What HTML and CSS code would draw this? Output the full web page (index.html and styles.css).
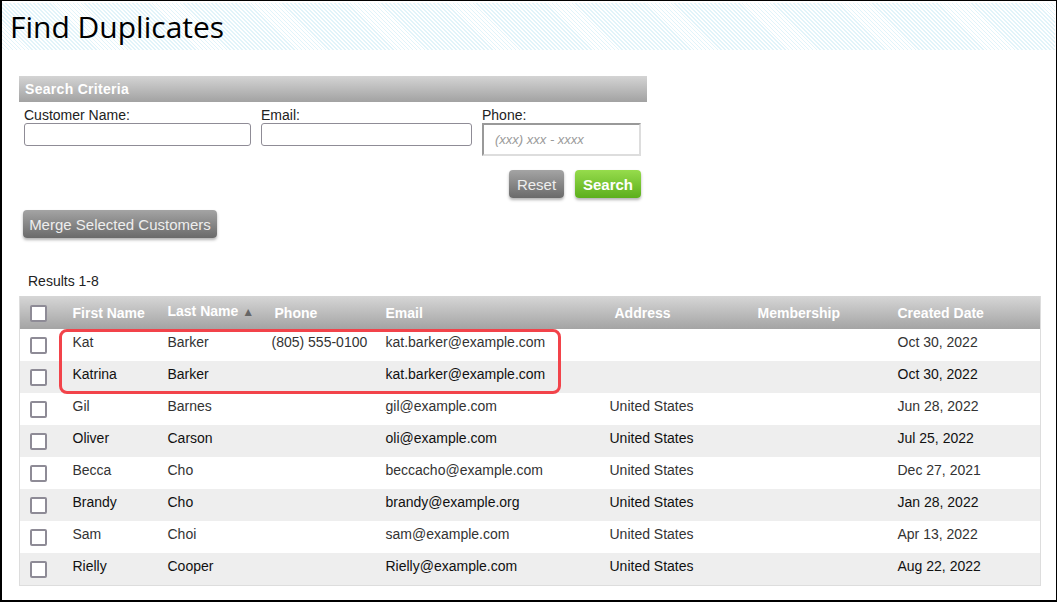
FILE: index.html
```html
<!DOCTYPE html>
<html lang="en">
<head>
    <meta charset="UTF-8">
    <title>Find Duplicates</title>
    <link rel="stylesheet" href="styles.css">
</head>
<body>
    <div class="page">
        <div class="title-bar">
            <h1>Find Duplicates</h1>
        </div>

        <div class="search-panel">
            <div class="panel-head">Search Criteria</div>
            <div class="fields">
                <div class="field name-field">
                    <label for="name">Customer Name:</label>
                    <input type="text" id="name">
                </div>
                <div class="field email-field">
                    <label for="email">Email:</label>
                    <input type="text" id="email">
                </div>
                <div class="field phone-field">
                    <label for="phone">Phone:</label>
                    <input type="text" id="phone" placeholder="(xxx) xxx - xxxx">
                </div>
            </div>
            <div class="actions">
                <button class="btn btn-grey reset-btn">Reset</button>
                <button class="btn btn-green">Search</button>
            </div>
        </div>

        <button class="btn btn-grey merge-btn">Merge Selected Customers</button>

        <div class="results-count">Results 1-8</div>

        <table class="results">
            <thead>
                <tr>
                    <th class="col-check"><span class="box"></span></th>
                    <th class="col-first">First Name</th>
                    <th class="col-last sorted">Last Name <span class="arrow">&#9650;</span></th>
                    <th class="col-phone">Phone</th>
                    <th class="col-email">Email</th>
                    <th class="col-address">Address</th>
                    <th class="col-member">Membership</th>
                    <th class="col-date">Created Date</th>
                </tr>
            </thead>
            <tbody>
                <tr>
                    <td><span class="box"></span></td>
                    <td>Kat</td><td>Barker</td><td class="phone">(805) 555-0100</td>
                    <td>kat.barker@example.com</td><td class="addr"></td><td></td><td>Oct 30, 2022</td>
                </tr>
                <tr>
                    <td><span class="box"></span></td>
                    <td>Katrina</td><td>Barker</td><td class="phone"></td>
                    <td>kat.barker@example.com</td><td class="addr"></td><td></td><td>Oct 30, 2022</td>
                </tr>
                <tr>
                    <td><span class="box"></span></td>
                    <td>Gil</td><td>Barnes</td><td class="phone"></td>
                    <td>gil@example.com</td><td class="addr">United States</td><td></td><td>Jun 28, 2022</td>
                </tr>
                <tr>
                    <td><span class="box"></span></td>
                    <td>Oliver</td><td>Carson</td><td class="phone"></td>
                    <td>oli@example.com</td><td class="addr">United States</td><td></td><td>Jul 25, 2022</td>
                </tr>
                <tr>
                    <td><span class="box"></span></td>
                    <td>Becca</td><td>Cho</td><td class="phone"></td>
                    <td>beccacho@example.com</td><td class="addr">United States</td><td></td><td>Dec 27, 2021</td>
                </tr>
                <tr>
                    <td><span class="box"></span></td>
                    <td>Brandy</td><td>Cho</td><td class="phone"></td>
                    <td>brandy@example.org</td><td class="addr">United States</td><td></td><td>Jan 28, 2022</td>
                </tr>
                <tr>
                    <td><span class="box"></span></td>
                    <td>Sam</td><td>Choi</td><td class="phone"></td>
                    <td>sam@example.com</td><td class="addr">United States</td><td></td><td>Apr 13, 2022</td>
                </tr>
                <tr>
                    <td><span class="box"></span></td>
                    <td>Rielly</td><td>Cooper</td><td class="phone"></td>
                    <td>Rielly@example.com</td><td class="addr">United States</td><td></td><td>Aug 22, 2022</td>
                </tr>
            </tbody>
        </table>

        <!-- annotation around the duplicate pair -->
        <div class="highlight"></div>
    </div>
</body>
</html>
```

FILE: styles.css
```css
/* General styles */
* {
    box-sizing: border-box;
}

body {
    margin: 0;
    font-family: "Liberation Sans", Arial, sans-serif;
    font-size: 14px;
    color: #333333;
}

.page {
    position: relative;
    width: 1057px;
    height: 602px;
    border: 1px solid #000000;
    border-left-width: 2px;
    border-bottom-width: 2px;
    overflow: hidden;
}

/* Striped title band */
.title-bar {
    margin: 2px 1px 0 0;
    height: 47px;
    background: repeating-linear-gradient(45deg, #ffffff 0 1.6px, #e2f4fa 1.6px 2.8px);
}

h1 {
    margin: 0;
    padding: 4px 0 0 8px;
    font-family: "Open Sans", "Noto Sans", sans-serif;
    font-weight: 400;
    font-size: 30px;
    line-height: 40px;
    color: #000000;
}

/* Search criteria */
.search-panel {
    width: 628px;
    margin: 26px 0 0 17px;
}

.panel-head {
    height: 26px;
    padding: 5px 6px;
    font-size: 14px;
    font-weight: bold;
    letter-spacing: 0.3px;
    color: #ffffff;
    background: linear-gradient(#d4d4d4, #a2a2a2);
}

.fields {
    display: flex;
    gap: 10px;
    padding-left: 5px;
    margin-top: 5px;
}

.field label {
    display: block;
    height: 16px;
    font-size: 14px;
    line-height: 16px;
    color: #222222;
}

.field input {
    display: block;
    height: 23px;
    border: 1px solid #8f8c96;
    border-radius: 3px;
    font-family: inherit;
    font-size: 13px;
}

.name-field input {
    width: 227px;
}

.email-field input {
    width: 211px;
}

.phone-field input {
    width: 159px;
    height: 33px;
    padding-left: 11px;
    border: 2px solid #dddddd;
    border-top-color: #999999;
    border-left-color: #999999;
    border-radius: 0;
}

.phone-field input::placeholder {
    font-family: "Liberation Sans Narrow", "Liberation Sans", sans-serif;
    font-style: italic;
    font-size: 13px;
    color: #9a9a9a;
}

.actions {
    display: flex;
    justify-content: flex-end;
    gap: 11px;
    margin-top: 14px;
    padding-right: 6px;
}

.btn {
    height: 28px;
    padding: 0 6px;
    border: none;
    border-radius: 4px;
    font-family: inherit;
    font-size: 15px;
    color: #eeeeee;
    white-space: nowrap;
    box-shadow: 0 2px 3px rgba(0, 0, 0, 0.3);
    cursor: pointer;
}

.btn-grey {
    background: linear-gradient(#a4a4a4, #6a6a6a);
}

.reset-btn {
    width: 55px;
}

.btn-green {
    width: 66px;
    font-weight: bold;
    color: #ffffff;
    background: linear-gradient(#96dc4c, #5caf1c);
}

.merge-btn {
    display: block;
    width: 194px;
    margin: 12px 0 0 21px;
}

.results-count {
    margin: 35px 0 0 26px;
    height: 16px;
    line-height: 16px;
    color: #222222;
}

/* Results table */
.results {
    width: 1021px;
    margin: 7px 0 0 17px;
    border-collapse: collapse;
    border: 1px solid #dddddd;
    border-top: none;
    table-layout: fixed;
}

.results th {
    height: 33px;
    padding: 1px 0 0 10px;
    text-align: left;
    font-size: 14px;
    font-weight: bold;
    color: #ffffff;
    background: linear-gradient(#d6d6d6, #a4a4a4);
}

.col-check { width: 43px; }
.col-first { width: 95px; }
.col-last { width: 107px; }
.col-phone { width: 111px; }
.col-email { width: 229px; }
.col-address { width: 143px; }
.col-member { width: 140px; }
.col-date { width: 153px; }

.results th.sorted {
    padding-top: 0;
    padding-bottom: 3px;
}

.arrow {
    font-size: 12px;
    color: #666666;
}

.results td {
    height: 32px;
    padding: 5px 0 0 10px;
    vertical-align: top;
    white-space: nowrap;
}

.results td.phone {
    padding-left: 7px;
}

.results td.addr {
    padding-left: 5px;
}

.results tbody tr:nth-child(even) {
    background-color: #eeeeee;
    color: #111111;
}

.box {
    display: block;
    width: 17px;
    height: 17px;
    margin-top: 3px;
    border: 2px solid #8e8b96;
    border-radius: 2px;
    background: #ffffff;
}

.results th .box {
    margin-top: 0;
}

/* Red box marking the duplicate pair */
.highlight {
    position: absolute;
    left: 57px;
    top: 328px;
    width: 502px;
    height: 65px;
    border: 3px solid #f2434a;
    border-radius: 8px;
}
```
